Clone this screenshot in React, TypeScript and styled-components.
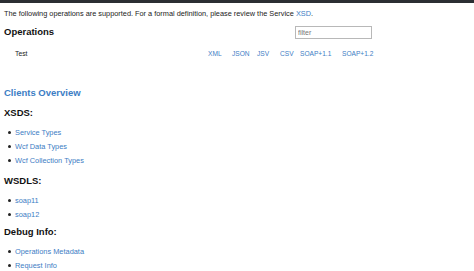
import React from "react";
import styled, { createGlobalStyle } from "styled-components";

const Global = createGlobalStyle`
  html, body { margin: 0; padding: 0; background: #fff; }
  body { font-family: "Liberation Sans", Arial, sans-serif; color: #222; }
`;

const TopBar = styled.div`
  height: 3px;
  background: #2b2e33;
`;

const Page = styled.div`
  padding: 6px 4px 0 4px;
`;

const Intro = styled.p`
  margin: 0;
  font-size: 7.35px;
  line-height: 9px;
  color: #222;
`;

const Link = styled.a`
  color: #3c7dc4;
  text-decoration: none;
`;

const OpsHeader = styled.div`
  display: flex;
  align-items: center;
  justify-content: space-between;
  margin-top: 7px;
  height: 14px;
`;

const H2 = styled.h2`
  margin: 0;
  font-size: 9.5px;
  line-height: 12px;
  font-weight: bold;
  color: #111;
`;

const Filter = styled.input`
  box-sizing: border-box;
  width: 77px;
  height: 13px;
  margin-right: 98px;
  border: 1px solid #b8b8b8;
  font-size: 7px;
  padding: 1px 2px;
  font-family: inherit;
  outline: none;
  &::placeholder { color: #777; }
`;

const OpRow = styled.div`
  display: flex;
  align-items: center;
  margin-top: 9px;
  height: 10px;
  font-size: 6.8px;
`;

const OpName = styled.span`
  padding-left: 11px;
  width: 193px;
  color: #222;
`;

const Formats = styled.div`
  display: flex;
`;

const Fmt = styled(Link)<{ $w: number }>`
  font-size: 6.6px;
  width: ${(p) => p.$w}px;
`;

const ClientsTitle = styled.h3`
  margin: 29px 0 0 0;
  font-size: 9.5px;
  line-height: 12px;
  font-weight: bold;
  color: #3c7dc4;
`;

const SectionTitle = styled.h3<{ $mt: number }>`
  margin: ${(p) => p.$mt}px 0 0 0;
  font-size: 9.5px;
  line-height: 12px;
  font-weight: bold;
  color: #111;
`;

const List = styled.ul`
  list-style: none;
  margin: 6px 0 0 0;
  padding: 0 0 0 4px;
`;

const Item = styled.li`
  font-size: 7.4px;
  height: 14px;
  display: flex;
  align-items: center;
  &::before {
    content: "";
    width: 3px;
    height: 3px;
    border-radius: 50%;
    background: #222;
    margin-right: 4px;
  }
`;

const formats: [string, number][] = [
  ["XML", 24],
  ["JSON", 25],
  ["JSV", 23],
  ["CSV", 20],
  ["SOAP+1.1", 42],
  ["SOAP+1.2", 40],
];

export default function App() {
  return (
    <>
      <Global />
      <TopBar />
      <Page>
        <Intro>
          The following operations are supported. For a formal definition, please review the Service{" "}
          <Link href="#">XSD</Link>.
        </Intro>
        <OpsHeader>
          <H2>Operations</H2>
          <Filter placeholder="filter" />
        </OpsHeader>
        <OpRow>
          <OpName>Test</OpName>
          <Formats>
            {formats.map(([f, w]) => (
              <Fmt key={f} href="#" $w={w}>
                {f}
              </Fmt>
            ))}
          </Formats>
        </OpRow>
        <ClientsTitle>Clients Overview</ClientsTitle>
        <SectionTitle $mt={8}>XSDS:</SectionTitle>
        <List>
          <Item><Link href="#">Service Types</Link></Item>
          <Item><Link href="#">Wcf Data Types</Link></Item>
          <Item><Link href="#">Wcf Collection Types</Link></Item>
        </List>
        <SectionTitle $mt={8}>WSDLS:</SectionTitle>
        <List>
          <Item><Link href="#">soap11</Link></Item>
          <Item><Link href="#">soap12</Link></Item>
        </List>
        <SectionTitle $mt={5}>Debug Info:</SectionTitle>
        <List>
          <Item><Link href="#">Operations Metadata</Link></Item>
          <Item><Link href="#">Request Info</Link></Item>
        </List>
      </Page>
    </>
  );
}
